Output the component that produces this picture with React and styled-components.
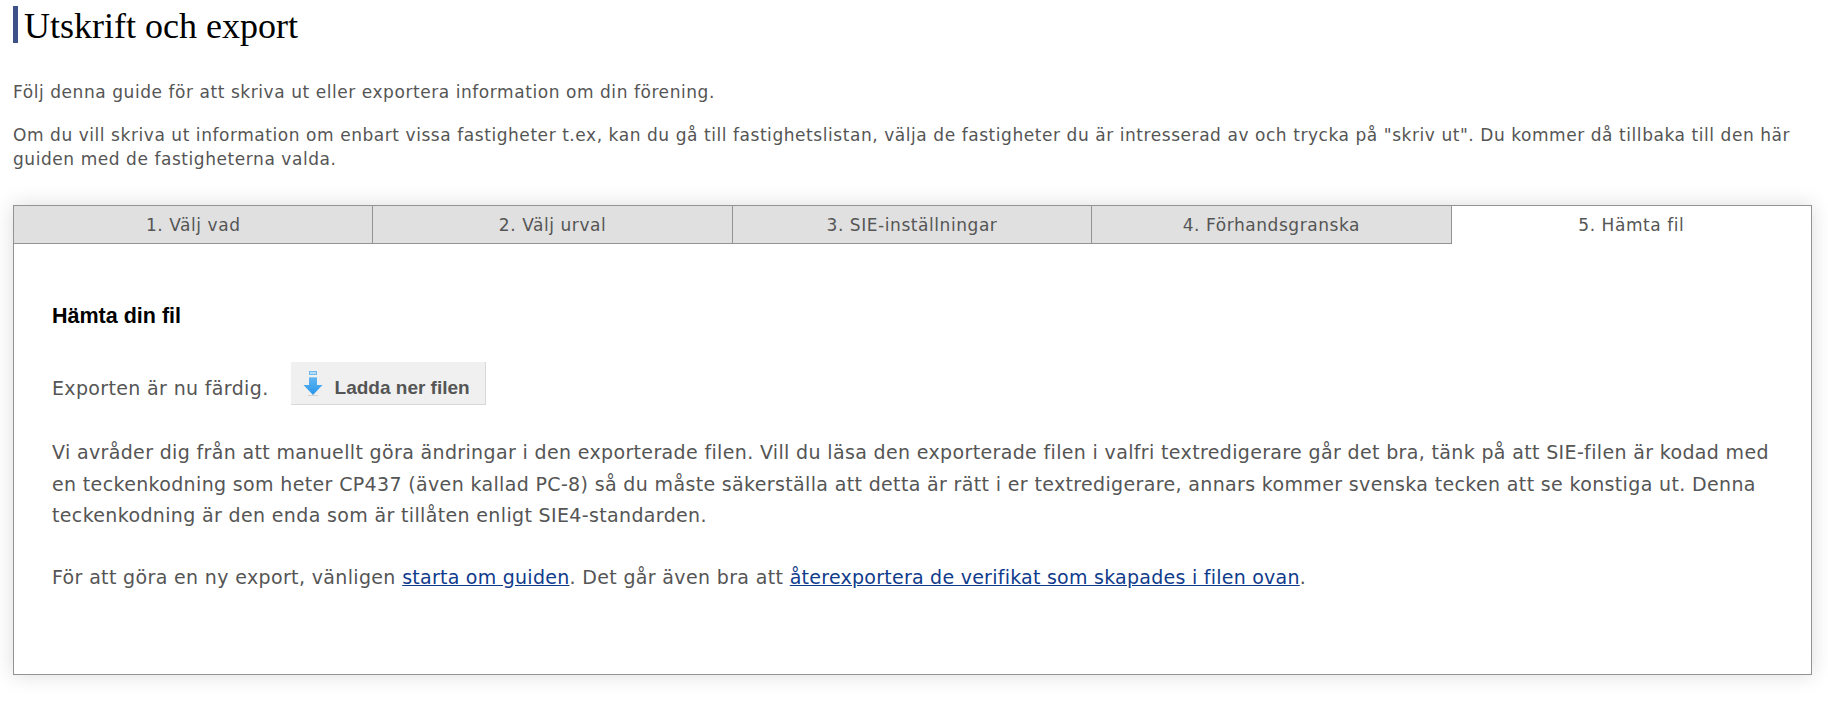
import React from "react";
import styled, { createGlobalStyle } from "styled-components";

const GlobalStyle = createGlobalStyle`
  html, body {
    margin: 0;
    padding: 0;
    background: #fff;
    font-family: "DejaVu Sans", Verdana, sans-serif;
    color: #555;
  }
`;

const Page = styled.div`
  width: 1828px;
  height: 703px;
  padding: 6px 16px 0 13px;
  box-sizing: border-box;
  overflow: hidden;
`;

const Title = styled.h1`
  margin: 0;
  height: 37px;
  padding-left: 6px;
  border-left: 5px solid #3f5288;
  font-family: "Liberation Serif", Georgia, serif;
  font-weight: 400;
  font-size: 36px;
  line-height: 40px;
  color: #000;
`;

const Intro = styled.p`
  margin: ${({ $top }) => $top}px 0 0;
  font-size: 17px;
  letter-spacing: 0.56px;
  line-height: 24px;
  color: #555;
`;

const Wizard = styled.div`
  margin-top: 34px;
  height: 470px;
  box-sizing: border-box;
  border: 1px solid #939393;
  background: #fff;
  box-shadow: 0 0 20px rgba(0, 0, 0, 0.14);
`;

const Tabs = styled.div`
  display: grid;
  grid-template-columns: repeat(5, 1fr);
`;

const Tab = styled.div`
  height: 38px;
  box-sizing: border-box;
  text-align: center;
  font-size: 17px;
  letter-spacing: 0.56px;
  line-height: 39px;
  color: #555;
  background: ${({ $active }) => ($active ? "#fff" : "#e0e0e0")};
  border-bottom: ${({ $active }) => ($active ? "none" : "1px solid #939393")};
  border-right: ${({ $active }) => ($active ? "none" : "1px solid #939393")};
`;

const Content = styled.div`
  padding: 60px 39px 0 38px;
`;

const Heading = styled.h2`
  margin: 0;
  font-family: "Liberation Sans", Arial, sans-serif;
  font-size: 21.5px;
  font-weight: 700;
  line-height: 24px;
  color: #000;
`;

const ExportRow = styled.div`
  display: flex;
  align-items: center;
  gap: 22px;
  margin-top: 34px;
`;

const ExportNote = styled.span`
  padding-top: 9px;
  font-size: 19px;
  letter-spacing: 0.35px;
  line-height: 24px;
  color: #555;
`;

const DownloadButton = styled.button`
  display: flex;
  align-items: center;
  gap: 12px;
  height: 43px;
  width: 195px;
  box-sizing: border-box;
  padding: 0 0 0 12px;
  background: #f0f0f0;
  border: 0;
  border-bottom: 1px solid #d8d8d8;
  border-right: 1px solid #d8d8d8;
`;

const ButtonLabel = styled.span`
  padding-top: 9px;
  font-family: "Liberation Sans", Arial, sans-serif;
  font-size: 19px;
  font-weight: 700;
  line-height: 22px;
  color: #555;
`;

const Paragraph = styled.p`
  margin: ${({ $top }) => $top}px 0 0;
  font-size: 19px;
  letter-spacing: 0.35px;
  line-height: 31.5px;
  color: #555;
`;

const Link = styled.a`
  color: #0f3b8c;
  letter-spacing: 0.25px;
  text-decoration: underline;
`;

const DownloadIcon = () => (
  <svg width="20" height="26" viewBox="0 0 20 26" aria-hidden="true">
    <defs>
      <linearGradient id="arrowFill" x1="0" y1="0" x2="0" y2="1">
        <stop offset="0" stopColor="#62b6f0" />
        <stop offset="1" stopColor="#2a96ea" />
      </linearGradient>
    </defs>
    <rect x="6.5" y="1.5" width="7" height="3" fill="#b3dcf6" stroke="#6db9ef" />
    <path d="M6 7h8v8h5.5L10 25 .5 15H6z" fill="url(#arrowFill)" />
    <path d="M6 7.5h8" stroke="#8ccbf3" />
    <path d="M5 25.5h10" stroke="#d2d2d2" />
  </svg>
);

const tabs = ["1. Välj vad", "2. Välj urval", "3. SIE-inställningar", "4. Förhandsgranska", "5. Hämta fil"];

const App = () => (
  <>
    <GlobalStyle />
    <Page>
      <Title>Utskrift och export</Title>
      <Intro $top={37}>Följ denna guide för att skriva ut eller exportera information om din förening.</Intro>
      <Intro $top={19}>
        Om du vill skriva ut information om enbart vissa fastigheter t.ex, kan du gå till fastighetslistan, välja de
        fastigheter du är intresserad av och trycka på "skriv ut". Du kommer då tillbaka till den här guiden med de
        fastigheterna valda.
      </Intro>
      <Wizard>
        <Tabs>
          {tabs.map((name, i) => (
            <Tab key={name} $active={i === 4}>
              {name}
            </Tab>
          ))}
        </Tabs>
        <Content>
          <Heading>Hämta din fil</Heading>
          <ExportRow>
            <ExportNote>Exporten är nu färdig.</ExportNote>
            <DownloadButton>
              <DownloadIcon />
              <ButtonLabel>Ladda ner filen</ButtonLabel>
            </DownloadButton>
          </ExportRow>
          <Paragraph $top={32}>
            Vi avråder dig från att manuellt göra ändringar i den exporterade filen. Vill du läsa den exporterade filen i
            valfri textredigerare går det bra, tänk på att SIE-filen är kodad med en teckenkodning som heter CP437 (även
            kallad PC-8) så du måste säkerställa att detta är rätt i er textredigerare, annars kommer svenska tecken att
            se konstiga ut. Denna teckenkodning är den enda som är tillåten enligt SIE4-standarden.
          </Paragraph>
          <Paragraph $top={30}>
            För att göra en ny export, vänligen <Link href="#">starta om guiden</Link>. Det går även bra att{" "}
            <Link href="#">återexportera de verifikat som skapades i filen ovan</Link>.
          </Paragraph>
        </Content>
      </Wizard>
    </Page>
  </>
);

export default App;
